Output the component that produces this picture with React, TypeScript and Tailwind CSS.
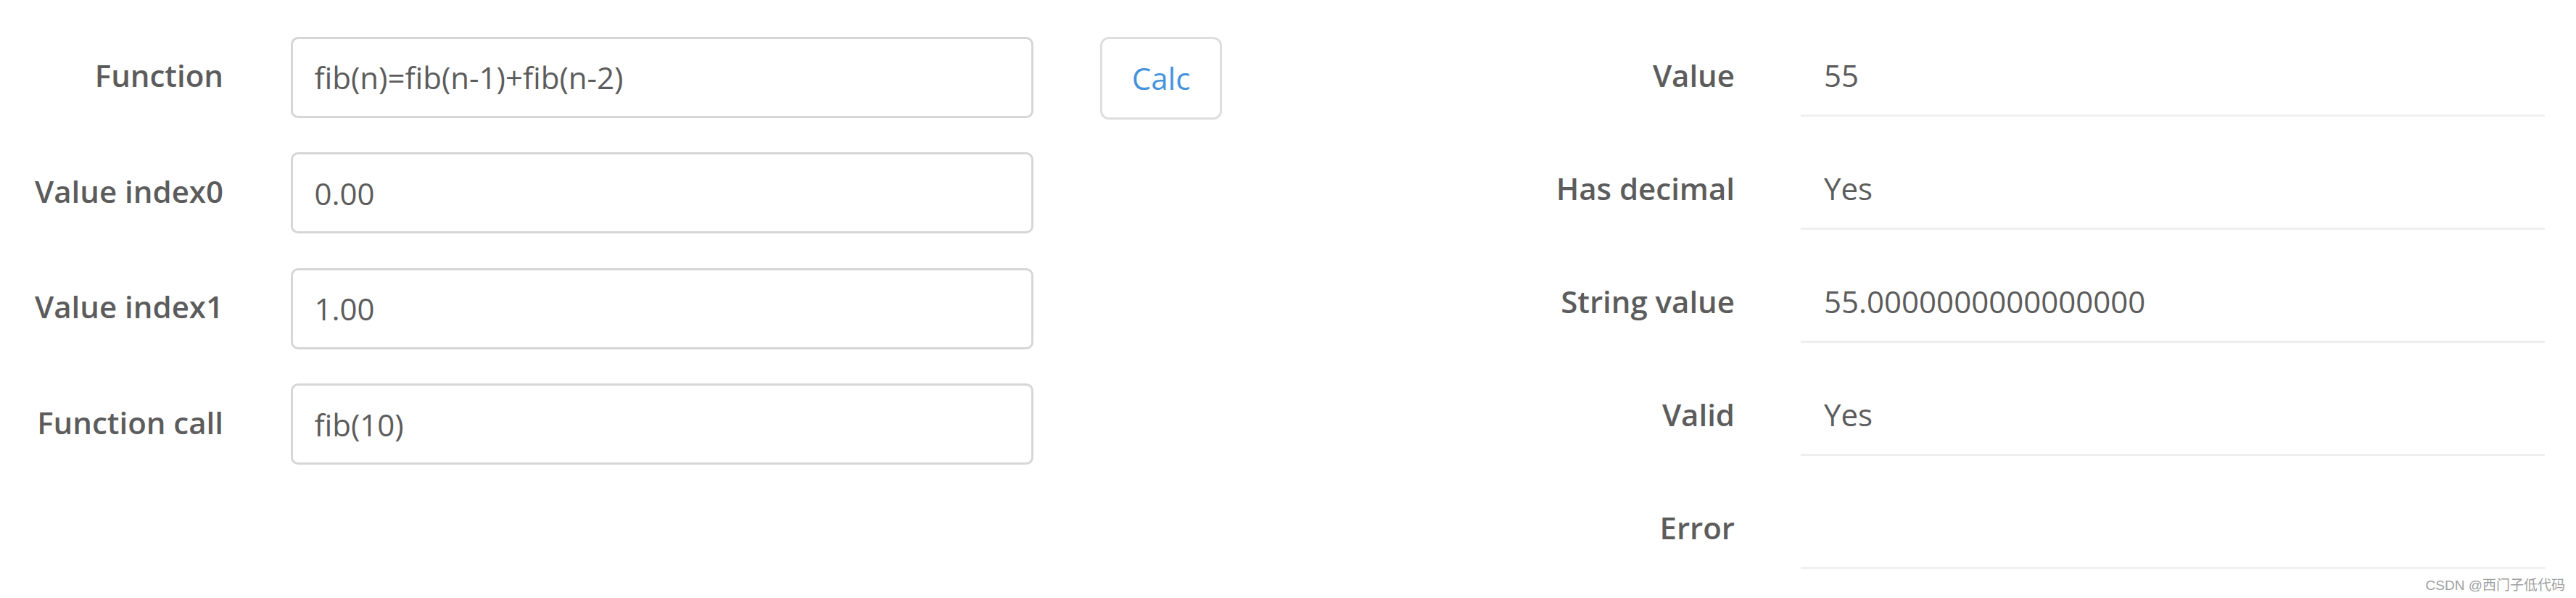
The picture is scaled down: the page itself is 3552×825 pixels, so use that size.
import React from 'react';

const inputs = [
  { label: 'Function', value: 'fib(n)=fib(n-1)+fib(n-2)' },
  { label: 'Value index0', value: '0.00' },
  { label: 'Value index1', value: '1.00' },
  { label: 'Function call', value: 'fib(10)' },
];

const results = [
  { label: 'Value', value: '55' },
  { label: 'Has decimal', value: 'Yes' },
  { label: 'String value', value: '55.0000000000000000' },
  { label: 'Valid', value: 'Yes' },
  { label: 'Error', value: '' },
];

const App: React.FC = () => {
  return (
    <div className="relative w-[3552px] h-[825px] bg-white overflow-hidden font-['Open_Sans','Noto_Sans_CJK_SC',sans-serif] text-[#5c5c5c] text-[42px] leading-[63px]">
      <div className="flex items-start">
        {/* Form */}
        <div className="grid grid-cols-[308px_1024px_168px] grid-rows-[112px_112px_112px_112px] gap-x-[92.5px] gap-y-[47.5px] pt-[50.5px]">
          {inputs.map((row, i) => (
            <React.Fragment key={row.label}>
              <label className="flex items-center justify-end h-[112px] pb-[6px] font-semibold whitespace-nowrap">
                {row.label}
              </label>
              <input
                readOnly
                value={row.value}
                className="h-[112px] w-[1024px] border-[3px] border-[#d6d6d6] rounded-[10px] px-[30px] text-[42px] text-[#5c5c5c] bg-white outline-none"
              />
              {i === 0 ? (
                <button className="self-start h-[114px] w-[168px] border-[3px] border-[#dedede] rounded-[12px] bg-white text-[#4592dd] text-[42px]">
                  Calc
                </button>
              ) : (
                <div />
              )}
            </React.Fragment>
          ))}
        </div>

        {/* Results */}
        <div className="ml-[407px] pt-[4.5px] flex flex-col">
          {results.map(row => (
            <div key={row.label} className="flex">
              <div className="w-[300px] text-right pt-[67px] font-semibold whitespace-nowrap">{row.label}</div>
              <div className="ml-[91px] w-[1026px] h-[156px] border-b-[3px] border-[#efefef] pl-[32px] pt-[67px] whitespace-nowrap">
                {row.value}
              </div>
            </div>
          ))}
        </div>
      </div>

      <div className="absolute right-[15px] bottom-[8px] text-[19px] leading-none text-[#a0a0a0] font-['Liberation_Sans','Noto_Sans_CJK_SC',sans-serif]">
        CSDN @西门子低代码
      </div>
    </div>
  );
};

export default App;
